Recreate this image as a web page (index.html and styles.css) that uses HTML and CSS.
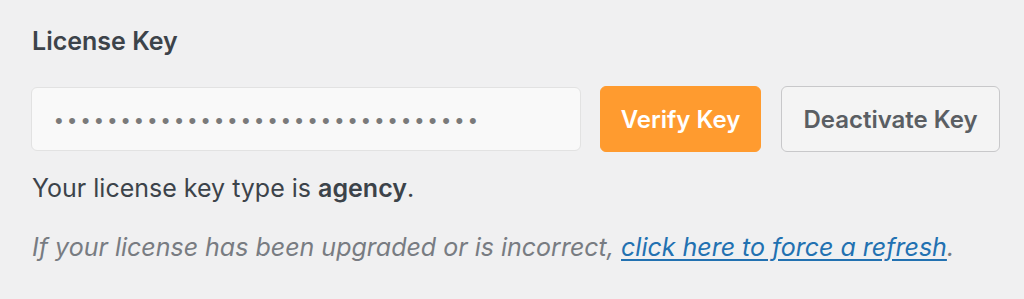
FILE: index.html
```html
<!DOCTYPE html>
<html lang="en">
<head>
<meta charset="utf-8">
<title>License Key</title>
<link rel="stylesheet" href="styles.css">
</head>
<body>
<div class="panel">
  <h2 class="title">License Key</h2>
  <div class="key-row">
    <input class="key-input" type="password" value="abcdefghijklmnopqrstuvwxyz012345" aria-label="License key">
    <button class="btn btn-primary" type="button">Verify Key</button>
    <button class="btn btn-secondary" type="button">Deactivate Key</button>
  </div>
  <p class="key-type">Your license key type is <strong>agency</strong>.</p>
  <p class="hint">If your license has been upgraded or is incorrect, <a href="#" class="hint-link">click here to force a refresh</a>.</p>
</div>
</body>
</html>
```

FILE: styles.css
```css
html, body {
  margin: 0;
  padding: 0;
  background: #f0f0f1;
}
body {
  font-family: Inter, "Liberation Sans", sans-serif;
  color: #3c434a;
}
.panel {
  padding: 25px 0 0 31px;
}
.title {
  margin: 0 0 0 1px;
  font-size: 25px;
  line-height: 32px;
  font-weight: 600;
  color: #3c434a;
}
.key-row {
  display: flex;
  align-items: center;
  gap: 20px;
  margin-top: 29px;
  height: 66px;
}
.key-input {
  flex: none;
  box-sizing: border-box;
  width: 550px;
  height: 64px;
  margin: 0 -1px 0 0;
  padding: 3px 0 0 23px;
  border: 1.5px solid #e2e2e2;
  border-radius: 6px;
  background: #f9f9f9;
  font-family: "Liberation Sans", sans-serif;
  font-size: 22px;
  letter-spacing: 5.65px;
  color: #7a7a7a;
  outline: none;
}
.btn {
  flex: none;
  box-sizing: border-box;
  height: 66px;
  padding: 0;
  border-radius: 6px;
  font-family: Inter, "Liberation Sans", sans-serif;
  font-size: 24px;
  font-weight: 600;
  white-space: nowrap;
  cursor: pointer;
}
.btn-primary {
  width: 161px;
  background: #ff9b2f;
  border: 1px solid #ff9b2f;
  color: #ffffff;
}
.btn-secondary {
  width: 219px;
  background: #f4f4f4;
  border: 1.5px solid #c8c8ca;
  color: #5a5e63;
}
.key-type {
  margin: 20px 0 0 1px;
  font-size: 25px;
  line-height: 32px;
}
.key-type strong {
  font-weight: 600;
}
.hint {
  margin: 27px 0 0 1px;
  font-size: 25px;
  line-height: 32px;
  font-style: italic;
  color: #787c82;
}
.hint-link {
  color: #2271b1;
  text-decoration: underline;
  text-underline-offset: 3px;
}
```
